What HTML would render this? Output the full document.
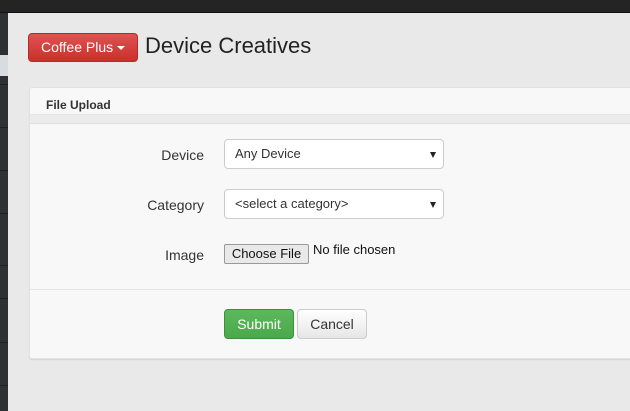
<!DOCTYPE html>
<html><head><style>
*{margin:0;padding:0;box-sizing:border-box}
body{width:630px;height:411px;overflow:hidden;background:#e9e9e9;font-family:"Liberation Sans",Arial,sans-serif;position:relative}
.top{position:absolute;left:0;top:0;width:630px;height:13px;background:#242424;border-bottom:1px solid #111}
.side{position:absolute;left:0;top:13px;width:8px;height:398px;background:#2f3034}
.sep{position:absolute;left:0;width:8px;height:1px;background:#1e1f22}
.red{position:absolute;left:28px;top:33px;width:110px;height:29px;border-radius:4px;background:linear-gradient(#e05252,#c9302c);border:1px solid #b52b27;color:#fff;font-size:14px;line-height:27px;padding-left:12px}
.caret{display:inline-block;border-left:4px solid transparent;border-right:4px solid transparent;border-top:4px solid #fff;vertical-align:middle;margin-left:4px}
.title{position:absolute;left:145px;top:33px;font-size:22px;color:#222}
.panel{position:absolute;left:29px;top:87px;width:610px;height:272px;background:#f8f8f8;border:1px solid #e2e2e2;border-radius:3px;box-shadow:0 1px 1px #d3d3d3}
.ph{height:26px;font-weight:bold;font-size:12px;color:#333;padding:10px 0 0 16px}
.strip{height:10px;background:#ebebeb;border-top:1px solid #e6e6e6;border-bottom:1px solid #e0e0e0}
.lbl{position:absolute;width:174px;text-align:right;font-size:14px;color:#333}
.sel{position:absolute;left:194px;width:220px;height:30px;background:#fff;border:1px solid #ccc;border-radius:4px;font-size:13px;color:#333;line-height:28px;padding-left:10px}
.sel:after{content:"";position:absolute;right:7px;top:12px;border-left:3.5px solid transparent;border-right:3.5px solid transparent;border-top:6px solid #222}
.file{position:absolute;left:194px;top:156px;width:85px;height:20px;background:#e9e9e9;border:1px solid #999;border-radius:2px;font-size:13px;text-align:center;line-height:18px;color:#111}
.nf{position:absolute;left:283px;top:154px;font-size:13px;color:#111}
.div{position:absolute;left:0;top:201px;width:100%;height:1px;background:#e4e4e4}
.btn{position:absolute;top:221px;height:30px;border-radius:4px;font-size:14px;line-height:28px;text-align:center}
</style></head><body>
<div class="top"></div>
<div class="side">
<div style="position:absolute;top:42px;left:0;width:8px;height:21px;background:#d6dcdf"></div>
<div class="sep" style="top:71px"></div><div class="sep" style="top:114px"></div><div class="sep" style="top:157px"></div><div class="sep" style="top:200px"></div><div class="sep" style="top:252px"></div><div class="sep" style="top:285px"></div><div class="sep" style="top:329px"></div><div class="sep" style="top:372px"></div>
</div>
<div class="red">Coffee Plus<span class="caret"></span></div>
<div class="title">Device Creatives</div>
<div class="panel">
<div class="ph">File Upload</div>
<div class="strip"></div>
<div class="lbl" style="top:59px">Device</div>
<div class="sel" style="top:51px">Any Device</div>
<div class="lbl" style="top:109px">Category</div>
<div class="sel" style="top:101px">&lt;select a category&gt;</div>
<div class="lbl" style="top:159px">Image</div>
<div class="file">Choose File</div>
<div class="nf">No file chosen</div>
<div class="div"></div>
<div class="btn" style="left:194px;width:70px;background:linear-gradient(#5cb85c,#4aa94a);border:1px solid #3e8f3e;color:#fff">Submit</div>
<div class="btn" style="left:267px;width:70px;background:linear-gradient(#fff,#e6e6e6);border:1px solid #ccc;color:#333">Cancel</div>
</div>
</body></html>
